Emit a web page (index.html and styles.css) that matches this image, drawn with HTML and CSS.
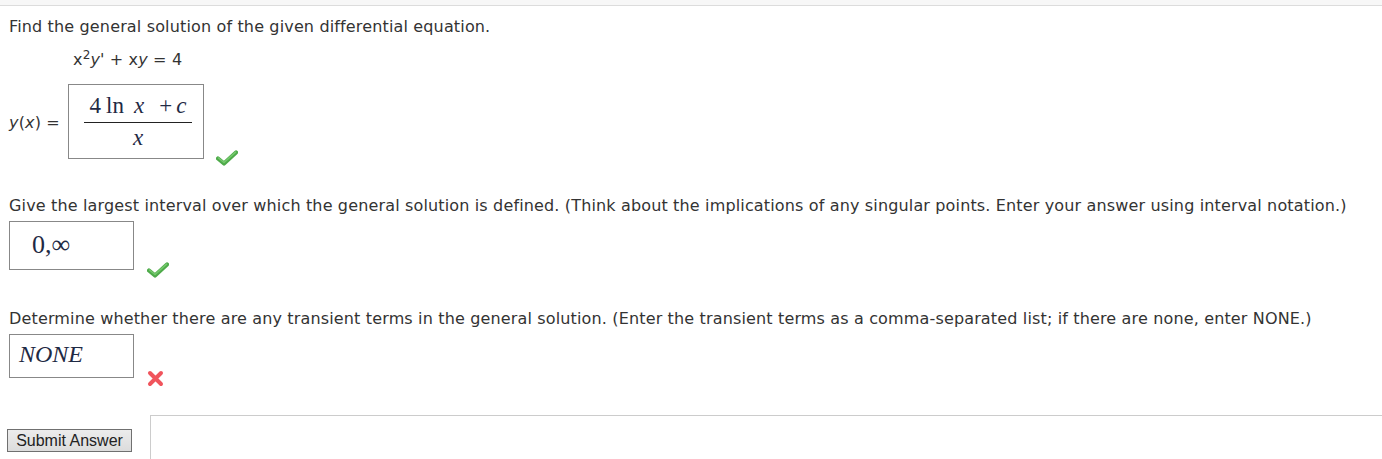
FILE: index.html
```html
<!DOCTYPE html>
<html>
<head>
<meta charset="utf-8">
<link rel="stylesheet" href="styles.css">
</head>
<body>
<div class="topbar"></div>
<div class="content">
  <p class="q q1">Find the general solution of the given differential equation.</p>
  <div class="eq">x<sup>2</sup><i>y</i>' + x<i>y</i> = 4</div>

  <div class="row row1">
    <span class="lbl"><i>y</i>(<i>x</i>) =</span>
    <div class="ansbox box1">
      <div class="frac">
        <div class="num"><span>4</span><span class="ln">ln</span><i class="vx">x</i><span class="plus">+</span><i>c</i></div>
        <div class="den"><i>x</i></div>
      </div>
    </div>
    <svg class="mark check c1" width="22" height="16" viewBox="0 0 22 16"><path d="M2 8.5 L8 13.5 L20 2.5" fill="none" stroke="#4eaa4a" stroke-width="4.2" stroke-linecap="round" stroke-linejoin="round"/><path d="M2.5 8 L8 12.5 L19.5 2.2" fill="none" stroke="#74c96c" stroke-width="1.6" stroke-linecap="round" stroke-linejoin="round"/></svg>
  </div>

  <p class="q q2">Give the largest interval over which the general solution is defined. (Think about the implications of any singular points. Enter your answer using interval notation.)</p>
  <div class="row row2">
    <div class="ansbox box2"><span class="val">0,∞</span></div>
    <svg class="mark check c2" width="22" height="16" viewBox="0 0 22 16"><path d="M2 8.5 L8 13.5 L20 2.5" fill="none" stroke="#4eaa4a" stroke-width="4.2" stroke-linecap="round" stroke-linejoin="round"/><path d="M2.5 8 L8 12.5 L19.5 2.2" fill="none" stroke="#74c96c" stroke-width="1.6" stroke-linecap="round" stroke-linejoin="round"/></svg>
  </div>

  <p class="q q3">Determine whether there are any transient terms in the general solution. (Enter the transient terms as a comma-separated list; if there are none, enter NONE.)</p>
  <div class="row row3">
    <div class="ansbox box3"><i class="val">NONE</i></div>
    <svg class="mark cross" width="17" height="17" viewBox="0 0 17 17"><path d="M3 3 L14 14 M14 3 L3 14" fill="none" stroke="#f0545c" stroke-width="4" stroke-linecap="round"/></svg>
  </div>

  <div class="footer">
    <button class="submit">Submit Answer</button>
    <div class="panel"></div>
  </div>
</div>
</body>
</html>
```
FILE: styles.css
```css
html, body {
  margin: 0;
  padding: 0;
  background: #fff;
}
body {
  font-family: "DejaVu Sans", Verdana, sans-serif;
  font-size: 16px;
  letter-spacing: 0.15px;
  color: #333;
  overflow: hidden;
}
.topbar {
  height: 5px;
  background: #f7f7f7;
  border-bottom: 1px solid #dcdcdc;
}
.content {
  padding-left: 9px;
}
.q {
  margin: 0;
  line-height: 18px;
}
.q1 {
  padding-top: 12px;
}
.eq {
  margin: 15px 0 0 64px;
  line-height: 18px;
}
.eq sup {
  font-size: 12px;
  vertical-align: 6px;
  line-height: 0;
}
.row {
  display: flex;
  align-items: flex-end;
}
.row1 {
  margin-top: 15px;
}
.lbl {
  align-self: center;
  width: 59px;
  margin-top: 2px;
}
.ansbox {
  border: 1px solid #888;
  box-sizing: border-box;
  font-family: "Liberation Serif", "Times New Roman", serif;
  color: #1f2a44;
  letter-spacing: 0;
}
.box1 {
  width: 136px;
  height: 75px;
  display: flex;
  align-items: center;
  padding-left: 15px;
}
.frac {
  display: flex;
  flex-direction: column;
  align-items: center;
  width: 108px;
  font-size: 23px;
}
.num {
  line-height: 24px;
  padding-bottom: 4px;
  border-bottom: 1px solid #222;
  width: 100%;
  text-align: center;
  white-space: nowrap;
}
.num i, .den i {
  font-style: italic;
}
.ln {
  margin-left: 5px;
}
.vx {
  margin-left: 10px;
}
.plus {
  margin-left: 15px;
  margin-right: 4px;
}
.den {
  line-height: 24px;
  padding-top: 3px;
}
.mark {
  display: block;
}
.c1 {
  margin-left: 12px;
  margin-bottom: -7px;
}
.q2 {
  margin-top: 38px;
}
.row2 {
  margin-top: 6px;
}
.box2 {
  width: 125px;
  height: 49px;
  font-size: 26px;
  padding: 8px 0 0 22px;
}
.c2 {
  margin-left: 13px;
  margin-bottom: -8px;
}
.q3 {
  margin-top: 40px;
}
.row3 {
  margin-top: 6px;
}
.box3 {
  width: 125px;
  height: 44px;
  font-size: 24px;
  padding: 6px 0 0 9px;
}
.cross {
  margin-left: 13px;
  margin-bottom: -9px;
}
.footer {
  display: flex;
  align-items: flex-start;
  margin-top: 37px;
  margin-left: -2px;
}
.submit {
  margin: 14px 0 0 0;
  width: 125px;
  height: 23px;
  padding: 0;
  font-family: "Liberation Sans", Arial, sans-serif;
  font-size: 16px;
  letter-spacing: 0;
  color: #222;
  background: linear-gradient(#ececec, #dcdcdc);
  border: 1px solid #707070;
  border-radius: 0;
}
.panel {
  flex: 1;
  margin-left: 18px;
  height: 60px;
  border-top: 1px solid #ccc;
  border-left: 1px solid #ccc;
}
```
